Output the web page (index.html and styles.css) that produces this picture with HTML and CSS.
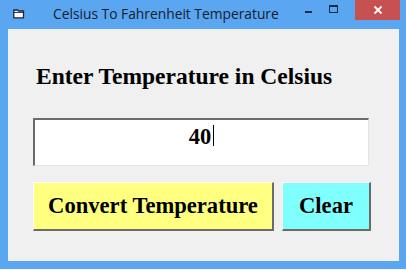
FILE: index.html
```html
<!DOCTYPE html>
<html>
<head>
<meta charset="utf-8">
<link rel="stylesheet" href="styles.css">
</head>
<body>
<div class="window">
  <div class="titlebar">
    <svg class="appicon" width="12" height="10" viewBox="0 0 12 10">
      <path d="M0.8 1 H4.8 L5.8 2 H10.5 V8.8 H0.8 Z" fill="#fff" stroke="#1d2a3a" stroke-width="1.3"/>
      <path d="M0.8 3.4 H10.5" stroke="#1d2a3a" stroke-width="1"/>
    </svg>
    <span class="title">Celsius To Fahrenheit Temperature</span>
    <div class="controls">
      <span class="ctl min"><span class="dash"></span></span>
      <span class="ctl max"><span class="box"></span></span>
      <span class="ctl close">
        <svg width="10" height="10" viewBox="0 0 10 10"><path d="M1.5 1.5 L8.5 8.5 M8.5 1.5 L1.5 8.5" stroke="#fff" stroke-width="1.8"/></svg>
      </span>
    </div>
  </div>
  <div class="client">
    <h1 class="heading">Enter Temperature in Celsius</h1>
    <div class="textbox"><span class="value">40</span><span class="caret"></span></div>
    <div class="buttons">
      <div class="btn convert">Convert Temperature</div>
      <div class="btn clear">Clear</div>
    </div>
  </div>
</div>
</body>
</html>
```
FILE: styles.css
```css
html, body {
  margin: 0;
  padding: 0;
  width: 406px;
  height: 270px;
  overflow: hidden;
  background: #fff;
}
.window {
  width: 406px;
  height: 269px;
  background: #5aa6f1;
  display: flex;
  flex-direction: column;
  box-sizing: border-box;
}
.titlebar {
  height: 29px;
  display: flex;
  align-items: flex-start;
}
.appicon {
  margin: 9px 0 0 13px;
}
.title {
  font-family: "Open Sans", "Liberation Sans", sans-serif;
  font-size: 13.8px;
  color: #14202c;
  margin: 5px 0 0 28px;
  line-height: 18px;
}
.controls {
  margin-left: auto;
  margin-right: 6px;
  display: flex;
  align-items: flex-start;
}
.ctl {
  display: flex;
  align-items: center;
  justify-content: center;
  height: 20px;
}
.min { width: 26px; }
.min .dash {
  width: 7px;
  height: 2px;
  background: #1a2b40;
  margin-top: 4px;
}
.max { width: 24px; margin-right: 10px; }
.max .box {
  width: 7px;
  height: 5px;
  border: 1px solid #1a2b40;
  border-top-width: 2px;
  margin-top: -3px;
}
.close {
  width: 45px;
  background: #c75050;
}
.client {
  margin: 0 7px 0 8px;
  height: 232px;
  background: #f0f0f0;
  padding: 0 0 0 25px;
  box-sizing: border-box;
}
.heading {
  margin: 0;
  padding-top: 33px;
  padding-left: 3px;
  font-family: "Liberation Serif", serif;
  font-weight: bold;
  font-size: 23.5px;
  line-height: 28px;
  color: #000;
  height: 89px;
  box-sizing: border-box;
}
.textbox {
  width: 336px;
  height: 48px;
  box-sizing: border-box;
  background: #fff;
  border-top: 2px solid #6b6b6b;
  border-left: 2px solid #6b6b6b;
  border-right: 1px solid #e4e4e4;
  border-bottom: 1px solid #e4e4e4;
  display: flex;
  justify-content: center;
  align-items: flex-start;
}
.value {
  font-family: "Liberation Serif", serif;
  font-weight: bold;
  font-size: 22.5px;
  line-height: 24px;
  margin-top: 5px;
  color: #000;
}
.caret {
  width: 1px;
  height: 21px;
  background: #000;
  margin-top: 5px;
  margin-left: 2px;
}
.buttons {
  display: flex;
  gap: 8px;
  margin-top: 16px;
}
.btn {
  height: 49px;
  box-sizing: border-box;
  border-top: 1px solid #fdfdfd;
  border-left: 1px solid #fdfdfd;
  border-right: 2px solid #6b6b6b;
  border-bottom: 2px solid #6b6b6b;
  display: flex;
  align-items: center;
  justify-content: center;
  font-family: "Liberation Serif", serif;
  font-weight: bold;
  font-size: 22.6px;
  color: #000;
}
.convert {
  width: 241px;
  background: #ffff80;
}
.clear {
  width: 89px;
  background: #80ffff;
}
```
